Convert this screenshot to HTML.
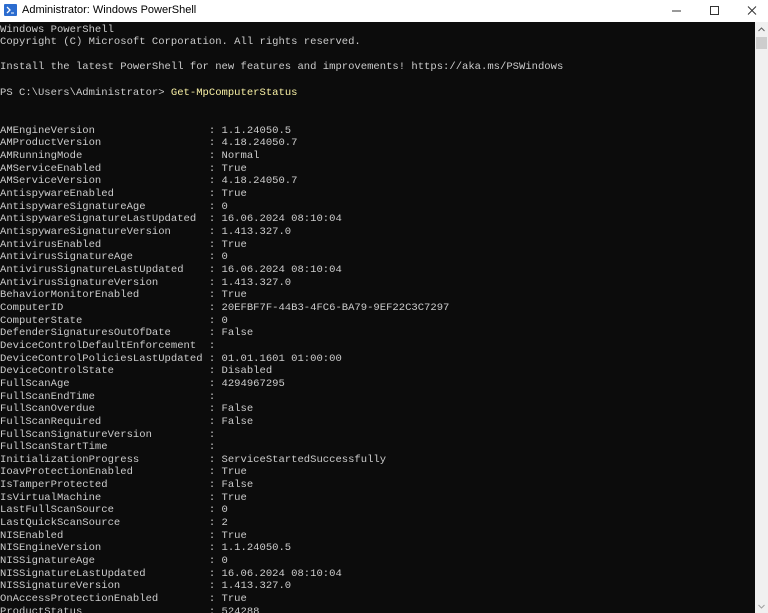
<!DOCTYPE html>
<html><head><meta charset="utf-8"><style>
html,body{margin:0;padding:0;width:768px;height:613px;overflow:hidden;background:#0c0c0c}
#title{position:absolute;left:0;top:0;width:768px;height:22px;background:#fff;font-family:"Liberation Sans",sans-serif;font-size:11px;color:#000}
#title .t{position:absolute;left:22px;top:4px}
#icon{position:absolute;left:4px;top:4px;width:13px;height:12px;background:#2b6ccf;border-radius:1px}
#term{position:absolute;left:0;top:22px;width:755px;height:591px;background:#0c0c0c;overflow:hidden}
pre{margin:0;position:absolute;left:0;top:1.5px;font-family:"Liberation Mono",monospace;font-size:10.55px;line-height:12.65px;color:#cccccc;white-space:pre}
.y{color:#f9f1a5}
#sb{position:absolute;left:755px;top:22px;width:13px;height:591px;background:#f0f0f0}
#thumb{position:absolute;left:1px;top:15px;width:11px;height:12px;background:#cdcdcd}
</style></head><body>
<div id="title"><div id="icon"><svg width="13" height="12" viewBox="0 0 13 12"><path d="M3 3 L6 6 L3 9" stroke="#fff" stroke-width="1.3" fill="none"/><path d="M7 9 H10" stroke="#fff" stroke-width="1"/></svg></div><span class="t">Administrator: Windows PowerShell</span>
<svg style="position:absolute;left:670px;top:4px" width="90" height="14" viewBox="0 0 90 14"><path d="M2 7 H11" stroke="#333" stroke-width="1"/><rect x="40.5" y="2.5" width="8" height="8" stroke="#333" fill="none"/><path d="M78 2.5 L86 10.5 M86 2.5 L78 10.5" stroke="#333" stroke-width="1"/></svg>
</div>
<div id="term"><pre>Windows PowerShell
Copyright (C) Microsoft Corporation. All rights reserved.

Install the latest PowerShell for new features and improvements! https://aka.ms/PSWindows

PS C:\Users\Administrator> <span class="y">Get-MpComputerStatus</span>


AMEngineVersion                  : 1.1.24050.5
AMProductVersion                 : 4.18.24050.7
AMRunningMode                    : Normal
AMServiceEnabled                 : True
AMServiceVersion                 : 4.18.24050.7
AntispywareEnabled               : True
AntispywareSignatureAge          : 0
AntispywareSignatureLastUpdated  : 16.06.2024 08:10:04
AntispywareSignatureVersion      : 1.413.327.0
AntivirusEnabled                 : True
AntivirusSignatureAge            : 0
AntivirusSignatureLastUpdated    : 16.06.2024 08:10:04
AntivirusSignatureVersion        : 1.413.327.0
BehaviorMonitorEnabled           : True
ComputerID                       : 20EFBF7F-44B3-4FC6-BA79-9EF22C3C7297
ComputerState                    : 0
DefenderSignaturesOutOfDate      : False
DeviceControlDefaultEnforcement  :
DeviceControlPoliciesLastUpdated : 01.01.1601 01:00:00
DeviceControlState               : Disabled
FullScanAge                      : 4294967295
FullScanEndTime                  :
FullScanOverdue                  : False
FullScanRequired                 : False
FullScanSignatureVersion         :
FullScanStartTime                :
InitializationProgress           : ServiceStartedSuccessfully
IoavProtectionEnabled            : True
IsTamperProtected                : False
IsVirtualMachine                 : True
LastFullScanSource               : 0
LastQuickScanSource              : 2
NISEnabled                       : True
NISEngineVersion                 : 1.1.24050.5
NISSignatureAge                  : 0
NISSignatureLastUpdated          : 16.06.2024 08:10:04
NISSignatureVersion              : 1.413.327.0
OnAccessProtectionEnabled        : True
ProductStatus                    : 524288</pre></div>
<div id="sb"><svg style="position:absolute;left:3px;top:5px" width="7" height="5" viewBox="0 0 7 5"><path d="M0.5 4 L3.5 1 L6.5 4" stroke="#606060" fill="none"/></svg><div id="thumb"></div><svg style="position:absolute;left:3px;top:582px" width="7" height="5" viewBox="0 0 7 5"><path d="M0.5 1 L3.5 4 L6.5 1" stroke="#a0a0a0" fill="none"/></svg></div>
</body></html>
